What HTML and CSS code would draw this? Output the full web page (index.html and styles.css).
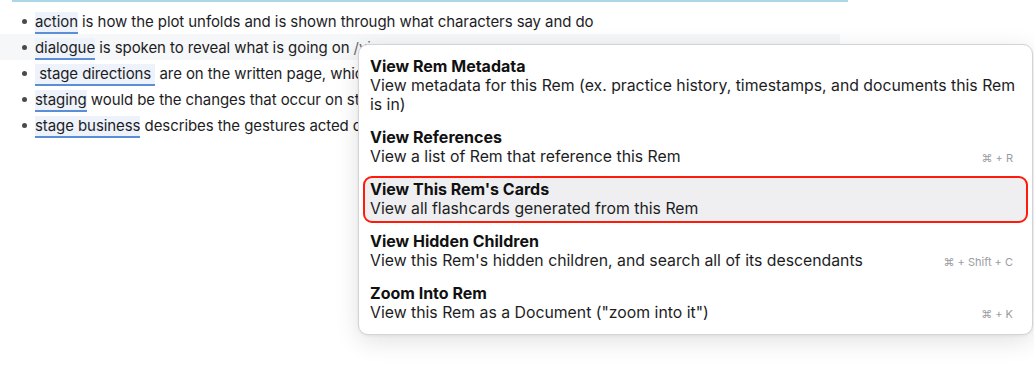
FILE: index.html
```html
<!DOCTYPE html>
<html>
<head>
<meta charset="utf-8">
<link rel="stylesheet" href="styles.css">
</head>
<body>
<div class="page">
  <div class="topline"></div>
  <ul class="list">
    <li class="row"><span class="dot"></span><span class="txt"><span class="ref">action</span> is how the plot unfolds and is shown through what characters say and do</span></li>
    <li class="row row-active"><span class="dot"></span><span class="txt"><span class="ref">dialogue</span> is spoken to reveal what is going on <span class="cmd">/view</span></span></li>
    <li class="row"><span class="dot"></span><span class="txt"><span class="ref">&nbsp;stage directions&nbsp;</span> are on the written page, which</span></li>
    <li class="row"><span class="dot"></span><span class="txt"><span class="ref">staging</span> would be the changes that occur on stage</span></li>
    <li class="row"><span class="dot"></span><span class="txt"><span class="ref">stage business</span> describes the gestures acted out</span></li>
  </ul>

  <div class="menu">
    <div class="item">
      <div class="title">View Rem Metadata</div>
      <div class="line"><span class="desc">View metadata for this Rem (ex. practice history, timestamps, and documents this Rem is in)</span></div>
    </div>
    <div class="item">
      <div class="title">View References</div>
      <div class="line"><span class="desc">View a list of Rem that reference this Rem</span><span class="key">⌘ + R</span></div>
    </div>
    <div class="item item-selected">
      <div class="title">View This Rem's Cards</div>
      <div class="line"><span class="desc">View all flashcards generated from this Rem</span></div>
    </div>
    <div class="item">
      <div class="title">View Hidden Children</div>
      <div class="line"><span class="desc">View this Rem's hidden children, and search all of its descendants</span><span class="key">⌘ + Shift + C</span></div>
    </div>
    <div class="item">
      <div class="title">Zoom Into Rem</div>
      <div class="line"><span class="desc">View this Rem as a Document ("zoom into it")</span><span class="key">⌘ + K</span></div>
    </div>
  </div>
</div>
</body>
</html>
```

FILE: styles.css
```css
html, body {
  margin: 0;
  padding: 0;
  background: #ffffff;
}

body {
  font-family: Inter, "Noto Sans", "DejaVu Sans", sans-serif;
  color: #1d1d1f;
  overflow: hidden;
}

.page {
  position: relative;
  width: 1034px;
  height: 366px;
}

.topline {
  margin-left: 12px;
  width: 836px;
  height: 2px;
  background: #abd7e6;
}

.list {
  list-style: none;
  margin: 0;
  padding: 6px 0 0 0;
  width: 840px;
}

.row {
  display: flex;
  align-items: center;
  height: 26px;
  font-size: 15px;
  letter-spacing: -0.08px;
  white-space: nowrap;
}

.row-active {
  background: #f6f7f8;
}

.dot {
  flex: none;
  width: 5px;
  height: 5px;
  border-radius: 50%;
  background: #4a4a4a;
  margin-left: 22px;
  margin-right: 8px;
}

.ref {
  background: #edf2fb;
  border-bottom: 2px solid #5a8fd8;
  padding-bottom: 1px;
}

.cmd {
  color: #6b6b70;
}

.menu {
  position: absolute;
  left: 358px;
  top: 44px;
  width: 665px;
  padding: 7px 4px;
  background: #ffffff;
  border: 1px solid #d3d3d8;
  border-radius: 10px;
  box-shadow: 0 6px 24px rgba(0, 0, 0, 0.12), 0 1px 3px rgba(0, 0, 0, 0.06);
  display: flex;
  flex-direction: column;
  gap: 4.5px;
}

.item {
  border: 2px solid transparent;
  border-radius: 9px;
  padding: 2.5px 2px 2.5px 5px;
}

.item-selected {
  border-color: #ff1a0a;
  background: #efeff1;
}

.title {
  font-size: 16px;
  font-weight: 700;
  line-height: 19px;
  color: #111111;
}

.line {
  display: flex;
  align-items: flex-end;
  justify-content: space-between;
}

.desc {
  font-size: 15.8px;
  line-height: 19.5px;
  color: #1d1d1f;
}

.key {
  flex: none;
  font-size: 11px;
  color: #9b9ba3;
  margin-right: 11px;
  margin-left: 12px;
  padding-bottom: 2px;
  font-family: Inter, "DejaVu Sans", sans-serif;
}
```
